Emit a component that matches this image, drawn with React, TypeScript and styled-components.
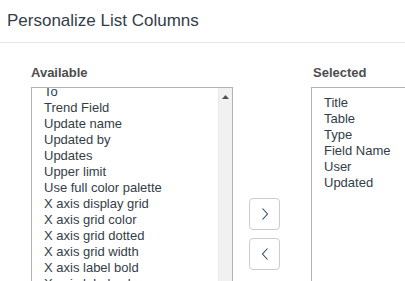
import React from "react";
import styled, { createGlobalStyle } from "styled-components";

const Global = createGlobalStyle`
  html, body { margin: 0; padding: 0; background: #fff; }
  body { font-family: "Liberation Sans", Arial, sans-serif; }
  #root { width: 405px; height: 281px; overflow: hidden; }
`;

const Page = styled.div`
  width: 405px;
  height: 281px;
  overflow: hidden;
  background: #fff;
`;

const Header = styled.div`
  height: 43px;
  box-sizing: border-box;
  padding: 11px 0 0 7px;
  border-bottom: 1px solid #e5e5e5;
`;

const Title = styled.h1`
  margin: 0;
  font-size: 17px;
  font-weight: normal;
  line-height: 20px;
  color: #343d47;
`;

const Body = styled.div`
  display: flex;
  padding: 21px 0 0 31px;
`;

const Column = styled.div<{ $width: number }>`
  display: flex;
  flex-direction: column;
  flex: 0 0 auto;
  width: ${(p) => p.$width}px;
`;

const Label = styled.div<{ $indent?: number }>`
  font-size: 13px;
  font-weight: bold;
  line-height: 18px;
  color: #4d4d4d;
  margin-bottom: 5px;
  padding-left: ${(p) => p.$indent ?? 0}px;
`;

const ListBox = styled.div`
  display: flex;
  height: 220px;
  border: 1px solid #b3b3b3;
  border-bottom: none;
  box-sizing: border-box;
  overflow: hidden;
  background: #fff;
`;

const Options = styled.ul<{ $offset: number }>`
  list-style: none;
  margin: ${(p) => p.$offset}px 0 0;
  padding: 0 0 0 12px;
  flex: 1;
  align-self: flex-start;
`;

const Option = styled.li`
  font-size: 13px;
  line-height: 16px;
  height: 16px;
  color: #343d47;
  white-space: nowrap;
`;

const Scrollbar = styled.div`
  width: 14px;
  flex: 0 0 14px;
  background: #f1f1f1;
  border-left: 1px solid #e8e8e8;
  display: flex;
  justify-content: center;
  padding-top: 7px;
  box-sizing: border-box;
`;

const ButtonColumn = styled.div`
  display: flex;
  flex-direction: column;
  gap: 8px;
  margin: 134px 31px 0 16px;
`;

const MoveButton = styled.button`
  width: 31px;
  height: 32px;
  box-sizing: border-box;
  border: 1px solid #cccccc;
  border-radius: 4px;
  background: #fff;
  padding: 0;
  display: flex;
  align-items: center;
  justify-content: center;
`;

const available = [
  "To",
  "Trend Field",
  "Update name",
  "Updated by",
  "Updates",
  "Upper limit",
  "Use full color palette",
  "X axis display grid",
  "X axis grid color",
  "X axis grid dotted",
  "X axis grid width",
  "X axis label bold",
  "X axis label color",
];

const selected = ["Title", "Table", "Type", "Field Name", "User", "Updated"];

const Chevron = ({ dir }: { dir: "left" | "right" }) => (
  <svg width="8" height="14" viewBox="0 0 8 14">
    <polyline
      points={dir === "right" ? "1.5,1.5 6.5,7 1.5,12.5" : "6.5,1.5 1.5,7 6.5,12.5"}
      fill="none"
      stroke="#2f4a6b"
      strokeWidth="1.1"
    />
  </svg>
);

export default function App() {
  return (
    <Page>
      <Global />
      <Header>
        <Title>Personalize List Columns</Title>
      </Header>
      <Body>
        <Column $width={202}>
          <Label>Available</Label>
          <ListBox>
            <Options $offset={-4}>
              {available.map((a) => (
                <Option key={a}>{a}</Option>
              ))}
            </Options>
            <Scrollbar>
              <svg width="7" height="4" viewBox="0 0 7 4">
                <polygon points="0,4 3.5,0 7,4" fill="#505050" />
              </svg>
            </Scrollbar>
          </ListBox>
        </Column>
        <ButtonColumn>
          <MoveButton aria-label="Add">
            <Chevron dir="right" />
          </MoveButton>
          <MoveButton aria-label="Remove">
            <Chevron dir="left" />
          </MoveButton>
        </ButtonColumn>
        <Column $width={160}>
          <Label $indent={2}>Selected</Label>
          <ListBox>
            <Options $offset={7}>
              {selected.map((s) => (
                <Option key={s}>{s}</Option>
              ))}
            </Options>
          </ListBox>
        </Column>
      </Body>
    </Page>
  );
}
